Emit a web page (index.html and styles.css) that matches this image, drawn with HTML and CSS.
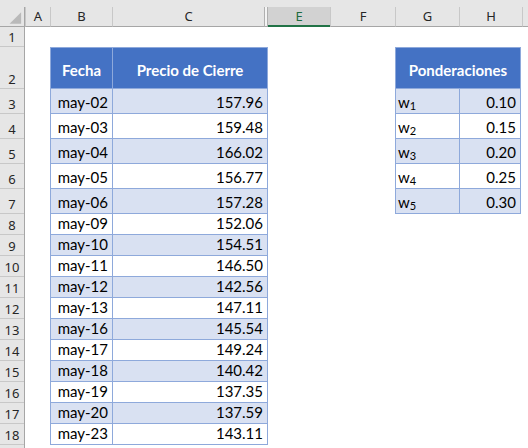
FILE: index.html
```html
<!DOCTYPE html>
<html lang="es">
  <head>
    <meta charset="UTF-8" />
    <title>Precio de Cierre - Ponderaciones</title>
    <link rel="stylesheet" href="styles.css">
  </head>
  <body>
    <div class="sheet">
      <div class="topbar"></div>

      <!-- cabecera de columnas -->
      <div class="ch corner">
        <svg width="25" height="20" viewBox="0 0 25 20"><polygon points="22,5 22,17 10,17" fill="#b9b9b9" /></svg>
      </div>
      <div class="ch">A</div>
      <div class="ch">B</div>
      <div class="ch">C</div>
      <div class="ch hide"></div>
      <div class="ch sel">E</div>
      <div class="ch">F</div>
      <div class="ch">G</div>
      <div class="ch">H</div>
      <div class="ch"></div>

      <!-- numeros de fila -->
      <div class="rows">
        <div class="rh">1</div>
        <div class="rh tall">2</div>
        <div class="rh mid">3</div>
        <div class="rh mid">4</div>
        <div class="rh mid">5</div>
        <div class="rh mid">6</div>
        <div class="rh mid">7</div>
        <div class="rh">8</div>
        <div class="rh">9</div>
        <div class="rh">10</div>
        <div class="rh">11</div>
        <div class="rh">12</div>
        <div class="rh">13</div>
        <div class="rh">14</div>
        <div class="rh">15</div>
        <div class="rh">16</div>
        <div class="rh">17</div>
        <div class="rh">18</div>
        <div class="rh"></div>
      </div>

      <div class="prices">
        <div class="th">Fecha</div>
        <div class="th">Precio de Cierre</div>
        <div class="row band"><div class="td">may-02</div><div class="td">157.96</div></div>
        <div class="row"><div class="td">may-03</div><div class="td">159.48</div></div>
        <div class="row band"><div class="td">may-04</div><div class="td">166.02</div></div>
        <div class="row"><div class="td">may-05</div><div class="td">156.77</div></div>
        <div class="row band"><div class="td">may-06</div><div class="td">157.28</div></div>
        <div class="row"><div class="td">may-09</div><div class="td">152.06</div></div>
        <div class="row band"><div class="td">may-10</div><div class="td">154.51</div></div>
        <div class="row"><div class="td">may-11</div><div class="td">146.50</div></div>
        <div class="row band"><div class="td">may-12</div><div class="td">142.56</div></div>
        <div class="row"><div class="td">may-13</div><div class="td">147.11</div></div>
        <div class="row band"><div class="td">may-16</div><div class="td">145.54</div></div>
        <div class="row"><div class="td">may-17</div><div class="td">149.24</div></div>
        <div class="row band"><div class="td">may-18</div><div class="td">140.42</div></div>
        <div class="row"><div class="td">may-19</div><div class="td">137.35</div></div>
        <div class="row band"><div class="td">may-20</div><div class="td">137.59</div></div>
        <div class="row"><div class="td">may-23</div><div class="td">143.11</div></div>
      </div>

      <div class="weights">
        <div class="th wide">Ponderaciones</div>
        <div class="row band"><div class="td w">w<sub>1</sub></div><div class="td">0.10</div></div>
        <div class="row"><div class="td w">w<sub>2</sub></div><div class="td">0.15</div></div>
        <div class="row band"><div class="td w">w<sub>3</sub></div><div class="td">0.20</div></div>
        <div class="row"><div class="td w">w<sub>4</sub></div><div class="td">0.25</div></div>
        <div class="row band"><div class="td w">w<sub>5</sub></div><div class="td">0.30</div></div>
      </div>
    </div>
  </body>
</html>
```

FILE: styles.css
```css
* {
  margin: 0;
  padding: 0;
  box-sizing: border-box;
}
body {
  background: #fff;
  font-family: "Lato", "Open Sans", sans-serif;
  overflow: hidden;
}

.sheet {
  width: 528px;
  height: 448px;
  display: grid;
  grid-template-columns: 25px 25px 62px 152px 4px 62px 65px 64px 63px 1fr;
  grid-template-rows: 7px 20px 20px 42px repeat(5, 25px) repeat(11, 21px) 1fr;
}

.topbar {
  grid-column: 1 / -1;
  grid-row: 1;
  background: #e6e6e6;
}

/* cabecera de columnas */
.ch {
  grid-row: 2;
  background: #e6e6e6;
  border-left: 1px solid #c8c8c8;
  border-bottom: 1px solid #a6a6a6;
  font-family: "Noto Sans", sans-serif;
  font-size: 13px;
  color: #262626;
  display: flex;
  align-items: center;
  justify-content: center;
  line-height: 1;
}
.ch.corner {
  border-left: none;
  border-right: 1px solid #a6a6a6;
}
.ch.hide {
  border-left: 1px solid #b0b0b0;
  border-right: 1px solid #b0b0b0;
  background: #f4f4f4;
}
.ch.sel {
  background: #d2d2d2;
  color: #1d6b40;
  border-left: none;
  border-bottom: 2px solid #217346;
}

/* numeros de fila */
.rows {
  grid-column: 1;
  grid-row: 3 / -1;
  display: flex;
  flex-direction: column;
  background: #e6e6e6;
  border-right: 1px solid #a6a6a6;
}
.rh {
  height: 21px;
  flex-shrink: 0;
  border-bottom: 1px solid #c8c8c8;
  font-family: "Noto Sans", sans-serif;
  font-size: 13px;
  color: #262626;
  display: flex;
  align-items: flex-end;
  justify-content: center;
  padding-bottom: 2px;
  line-height: 1;
}
.rh:first-child {
  height: 20px;
}
.rh.tall {
  height: 42px;
}
.rh.mid {
  height: 25px;
}

/* tablas */
.prices,
.weights {
  display: grid;
  border-left: 1px solid #8ea9db;
  border-top: 1px solid #8ea9db;
  font-size: 15px;
  color: #000;
}
.prices {
  grid-column: 3 / 6;
  grid-row: 4 / 21;
  grid-template-columns: 62px 1fr;
  grid-template-rows: 41px repeat(5, 25px) repeat(11, 21px);
}
.weights {
  grid-column: 8 / 10;
  grid-row: 4 / 10;
  grid-template-columns: 64px 1fr;
  grid-template-rows: 41px repeat(5, 25px);
  margin-right: 1px;
}

.row {
  display: contents;
}
.th {
  background: #4472c4;
  color: #fff;
  font-weight: bold;
  border-right: 1px solid #8ea9db;
  border-bottom: 1px solid #8ea9db;
  display: flex;
  align-items: center;
  justify-content: center;
  padding-top: 3px;
}
.th.wide {
  grid-column: span 2;
}
.td {
  background: #fff;
  border-right: 1px solid #8ea9db;
  border-bottom: 1px solid #8ea9db;
  display: flex;
  align-items: flex-end;
  justify-content: flex-end;
  padding: 0 4px 2px 0;
  line-height: 18px;
}
.row.band .td {
  background: #d9e1f2;
}
.td.w {
  justify-content: flex-start;
  padding-left: 2px;
}
.td.w sub {
  font-size: 11px;
  line-height: 1;
  vertical-align: -3px;
}
```
